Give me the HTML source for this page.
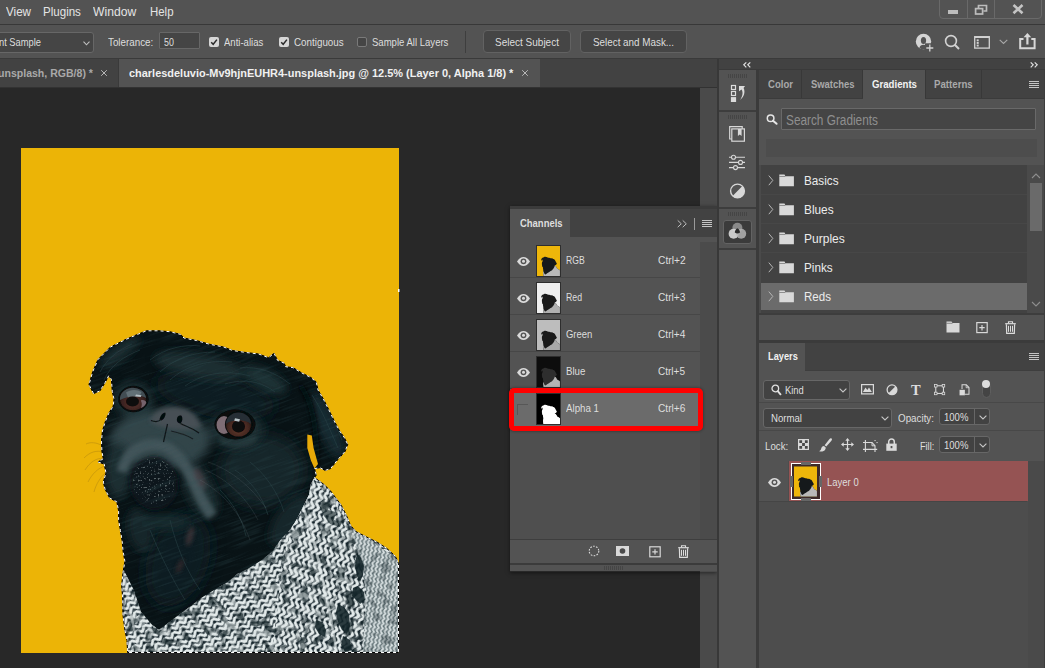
<!DOCTYPE html>
<html><head><meta charset="utf-8"><title>Photoshop</title>
<style>
*{box-sizing:border-box;margin:0;padding:0}
html,body{width:1045px;height:668px;overflow:hidden;background:#383838;font-family:"Liberation Sans",sans-serif;color:#dedede}
.a{position:absolute}
.t{position:absolute;white-space:nowrap;line-height:14px;height:14px;font-size:10.5px;color:#dedede}
.t{transform-origin:0 50%}
/*FIT*/
#m1{left:6.0px !important;transform:scaleX(0.969)}
#m2{left:43.4px !important;transform:scaleX(0.963)}
#m3{left:93.3px !important;transform:scaleX(1.012)}
#m4{left:150.0px !important;transform:scaleX(0.952)}
#o0{left:-1.0px !important;transform:scaleX(0.888)}
#o1{left:107.6px !important;transform:scaleX(0.933)}
#o2{left:164.3px !important;transform:scaleX(0.847)}
#o3{left:224.0px !important;transform:scaleX(0.908)}
#o4{left:294.0px !important;transform:scaleX(0.936)}
#o5{left:372.0px !important;transform:scaleX(0.909)}
#o6{left:494.8px !important;transform:scaleX(0.953)}
#o7{left:593.0px !important;transform:scaleX(0.938)}
#d1{left:-2.0px !important;transform:scaleX(0.959)}
#d2{left:129.2px !important;transform:scaleX(0.995)}
#c0{left:520.0px !important;transform:scaleX(0.860)}
#c1{left:566.3px !important;transform:scaleX(0.821)}
#c4{left:566.0px !important;transform:scaleX(0.923)}
#c5{left:566.0px !important;transform:scaleX(0.926)}
#k1{left:658.0px !important;transform:scaleX(0.975)}
#k4{left:658.0px !important;transform:scaleX(0.954)}
#g1{left:768.0px !important;transform:scaleX(0.870)}
#g2{left:811.0px !important;transform:scaleX(0.857)}
#g3{left:872.0px !important;transform:scaleX(0.876)}
#g5{left:786.0px !important;transform:scaleX(0.844)}
#r1{left:804.0px !important;transform:scaleX(0.937)}
#g4{left:934.0px !important;transform:scaleX(0.879)}
#r2{left:803.8px !important;transform:scaleX(0.946)}
#r3{left:803.8px !important;transform:scaleX(0.962)}
#r4{left:803.8px !important;transform:scaleX(0.939)}
#r5{left:803.8px !important;transform:scaleX(0.922)}
#l0{left:768.2px !important;transform:scaleX(0.840)}
#l1{left:785.2px !important;transform:scaleX(0.895)}
#l2{left:771.0px !important;transform:scaleX(0.916)}
#l3{left:898.2px !important;transform:scaleX(0.935)}
#l4{left:944.2px !important;transform:scaleX(0.908)}
#l5{left:765.0px !important;transform:scaleX(0.924)}
#l6{left:920.0px !important;transform:scaleX(0.869)}
#l7{left:944.2px !important;transform:scaleX(0.908)}
#l8{left:827.3px !important;transform:scaleX(0.905)}
#c2{left:566.0px !important;transform:scaleX(0.830)}
#c3{left:566.0px !important;transform:scaleX(0.901)}
#k2{left:658.0px !important;transform:scaleX(0.968)}
#k3{left:658.0px !important;transform:scaleX(0.968)}
#k5{left:658.0px !important;transform:scaleX(0.968)}
/*ENDFIT*/
.m{font-size:12px;line-height:16px;height:16px;top:4px;color:#e4e4e4}
svg{position:absolute;overflow:visible}
#menubar{left:0;top:0;width:1045px;height:24px;background:#535353}
#optbar{left:0;top:25px;width:1045px;height:33px;background:#535353}
#tabbar{left:0;top:59px;width:717px;height:28px;background:#424242}
#canvas{left:0;top:88px;width:700px;height:580px;background:#282828}
#vscroll{left:700px;top:88px;width:17px;height:580px;background:#4a4a4a}
#dockhdr{left:719px;top:59px;width:326px;height:10px;background:#424242}
#iconcol{left:719px;top:70px;width:37px;height:598px;background:#535353}
#rightp{left:759px;top:70px;width:286px;height:598px;background:#535353}
.box{position:absolute;background:#454545;border:1px solid #676767;border-radius:3px}
.cb{position:absolute;width:10px;height:10px;top:37px;background:#d6d6d6;border-radius:2px}
.btn{position:absolute;top:30px;height:23px;background:#454545;border:1px solid #626262;border-radius:4px}
#chan{left:510px;top:206px;width:207px;height:366px;box-shadow:0 1px 4px rgba(0,0,0,.5)}
.crow{position:absolute;left:0;width:190px;height:37px;background:#535353;border-bottom:1px solid #474747}
.b{font-weight:bold;font-size:11px}
.hamb{width:10px;height:7px;background:repeating-linear-gradient(to bottom,#c4c4c4 0 1px,transparent 1px 2px)}
.grip{background:repeating-linear-gradient(to right,#454545 0 1px,transparent 1px 2px)}
.l{font-size:12.500px;line-height:16px;height:16px;color:#ececec}
</style></head><body>
<svg width="0" height="0" style="position:absolute"><defs>
<g id="eye"><path d="M0 4.500C2 1.300 4.300 0 6.500 0S11 1.300 13 4.500C11 7.700 8.700 9 6.500 9S2 7.700 0 4.500z" fill="#dadada"/><circle cx="6.500" cy="4.300" r="2.900" fill="#535353"/><circle cx="6.500" cy="4.300" r="1.500" fill="#dadada"/></g>
<path id="minidog" d="M6 14c1-2 3-3 5-3c3 0 6 1 8 3c1 1 1.500 3 .5 4l-2 1l-1 4l-4 7H8l-1-8c-1-2-2-5-1-8z"/>
<path id="miniscarf" d="M9 31l1-5l4 2l4-5l4 1l2 3v4z"/>
<path id="chev" d="M0.800 0.600L4.800 5.400L0.800 10.200" fill="none" stroke="#b6b6b6" stroke-width="1"/>
<g id="folder"><path d="M0.300 0.600h5.200l0.900 1.700h8.500v9.900H0.300z" fill="#d9d9d9"/><path d="M0.300 2.500h6" stroke="#424242" stroke-width="0.500"/></g>
<path id="dn" d="M0.600 0.600L4 4L7.400 0.600" fill="none" stroke="#c6c6c6" stroke-width="1.100"/>
<g id="trash"><path d="M0.200 2.700h10.600" stroke="#dcdcdc" stroke-width="1.200" fill="none"/><path d="M3.500 2.400V0.700h4v1.700" stroke="#dcdcdc" stroke-width="1.100" fill="none"/><path d="M1.400 3.200l0.300 9.200h7.600l0.300-9.200" stroke="#dcdcdc" stroke-width="1.200" fill="none"/><path d="M3.500 4.800v6M5.500 4.800v6M7.500 4.800v6" stroke="#dcdcdc" stroke-width="1" fill="none"/></g>
</defs></svg>
<!-- MENU BAR -->
<div id="menubar" class="a">
 <span class="t m" id="m1" style="left:6px">View</span>
 <span class="t m" id="m2" style="left:43px">Plugins</span>
 <span class="t m" id="m3" style="left:93px">Window</span>
 <span class="t m" id="m4" style="left:149px">Help</span>
 <div class="a" style="left:939px;top:-2px;width:103px;height:21px;border:1px solid #696969;border-radius:0 0 4px 4px"></div>
 <div class="a" style="left:967px;top:0;width:1px;height:18px;background:#696969"></div>
 <div class="a" style="left:994px;top:0;width:1px;height:18px;background:#696969"></div>
 <div class="a" style="left:948px;top:10px;width:10px;height:4px;background:#bcbcbc"></div>
 <svg style="left:974px;top:4px" width="14" height="12" viewBox="0 0 14 12"><path d="M4.5 4.2V1.5h8v5.5H9.4" fill="none" stroke="#bcbcbc" stroke-width="1.7"/><rect x="1.6" y="4.6" width="7" height="5.4" fill="none" stroke="#bcbcbc" stroke-width="1.7"/></svg>
 <svg style="left:1012px;top:4px" width="12" height="10" viewBox="0 0 12 10"><path d="M1.5 1L10.5 9.2M10.5 1L1.5 9.2" fill="none" stroke="#c4c4c4" stroke-width="2.6"/></svg>
</div>
<!-- OPTIONS BAR -->
<div id="optbar" class="a"></div>
<div class="box" style="left:-5px;top:32px;width:99px;height:21px"></div>
<span class="t" id="o0" style="left:-5px;top:35px">nt Sample</span>
<svg style="left:83px;top:41px" width="7" height="5" viewBox="0 0 7 5"><path d="M0.500 0.600L3.500 3.800L6.500 0.600" fill="none" stroke="#c0c0c0" stroke-width="1.100"/></svg>
<span class="t" id="o1" style="left:107px;top:35px">Tolerance:</span>
<div class="box" style="left:159px;top:32px;width:41px;height:17px;border-radius:1px"></div>
<span class="t" id="o2" style="left:164px;top:35px">50</span>
<div class="cb" style="left:209px"></div>
<div class="cb" style="left:279px"></div>
<div class="cb" style="left:357px;background:#454545;border:1px solid #7a7a7a"></div>
<svg style="left:209px;top:37px" width="10" height="10" viewBox="0 0 10 10"><path d="M2.2 5.2L4.2 7.3L7.9 2.6" fill="none" stroke="#2a2a2a" stroke-width="1.5"/></svg>
<svg style="left:279px;top:37px" width="10" height="10" viewBox="0 0 10 10"><path d="M2.2 5.2L4.2 7.3L7.9 2.6" fill="none" stroke="#2a2a2a" stroke-width="1.5"/></svg>
<span class="t" id="o3" style="left:224px;top:35px">Anti-alias</span>
<span class="t" id="o4" style="left:294px;top:35px">Contiguous</span>
<span class="t" id="o5" style="left:372px;top:35px">Sample All Layers</span>
<div class="a" style="left:465px;top:31px;width:1px;height:22px;background:#3e3e3e"></div>
<div class="btn" style="left:483px;width:88px"></div>
<div class="btn" style="left:580px;width:107px"></div>
<span class="t" id="o6" style="left:495px;top:35px">Select Subject</span>
<span class="t" id="o7" style="left:593px;top:35px">Select and Mask...</span>
<!-- right icons of options bar -->
<svg style="left:914px;top:32px" width="22" height="20" viewBox="0 0 22 20">
 <circle cx="9.500" cy="9.500" r="7.700" fill="#d4d4d4"/>
 <ellipse cx="9.500" cy="8.400" rx="2.600" ry="3.500" fill="#535353"/>
 <path d="M5.400 16C5.800 13.800 7.400 12.800 9.500 12.800S13.200 13.800 13.600 16C11.400 17.600 7.600 17.600 5.400 16Z" fill="#535353"/>
 <rect x="11" y="11.300" width="9.500" height="9" fill="#535353"/>
 <path d="M15.800 12.500v7M12.300 16h7" stroke="#d4d4d4" stroke-width="1.300" fill="none"/>
</svg>
<svg style="left:944px;top:34px" width="17" height="17" viewBox="0 0 17 17"><circle cx="7" cy="7" r="5.400" fill="none" stroke="#d2d2d2" stroke-width="1.600"/><path d="M10.800 10.800L15 15" stroke="#d2d2d2" stroke-width="2" fill="none"/></svg>
<svg style="left:974px;top:36px" width="16" height="13" viewBox="0 0 16 13"><rect x="0.700" y="0.700" width="14.600" height="11.400" fill="none" stroke="#d2d2d2" stroke-width="1.300"/><rect x="0.700" y="0.400" width="14.600" height="1.600" fill="#d2d2d2"/><rect x="2.700" y="3.400" width="2" height="1.900" fill="#d2d2d2"/><rect x="2.700" y="6" width="2" height="1.900" fill="#d2d2d2"/><rect x="2.700" y="8.600" width="2" height="1.900" fill="#d2d2d2"/></svg>
<svg style="left:999px;top:39px" width="9" height="6" viewBox="0 0 9 6"><path d="M0.700 0.800L4.500 4.400L8.300 0.800" fill="none" stroke="#a8a8a8" stroke-width="1.100"/></svg>
<svg style="left:1019px;top:32px" width="17" height="18" viewBox="0 0 17 18"><path d="M4.500 7H1.200v9.300h14.400V7h-3.300" fill="none" stroke="#d8d8d8" stroke-width="2"/><path d="M8.400 12.500V4" stroke="#d8d8d8" stroke-width="2.200" fill="none"/><path d="M4.600 5.200L8.400 1l3.800 4.200z" fill="#d8d8d8"/></svg>
<!-- DOC TAB BAR -->
<div class="a" style="left:0;top:58px;width:1045px;height:1px;background:#3a3a3a"></div>
<div id="tabbar" class="a"></div>
<div class="a" style="left:0;top:87px;width:717px;height:1px;background:#323232"></div>
<div class="a" style="left:118px;top:59px;width:1px;height:28px;background:#3a3a3a"></div>
<div class="a" style="left:119px;top:59px;width:421px;height:28px;background:#535353"></div>
<span class="t" id="d1" style="left:-3px;top:66px;font-weight:bold;color:#a9a9a9;font-size:11px">unsplash, RGB/8) *</span>
<span class="t" id="d2" style="left:129px;top:66px;font-weight:bold;color:#f0f0f0;font-size:11px">charlesdeluvio-Mv9hjnEUHR4-unsplash.jpg @ 12.5% (Layer 0, Alpha 1/8) *</span>
<svg style="left:101px;top:70px" width="6" height="6" viewBox="0 0 6 6"><path d="M0.200 0.200L5.800 5.800M5.800 0.200L0.200 5.800" stroke="#c4c4c4" stroke-width="0.900" fill="none"/></svg>
<svg style="left:522px;top:70px" width="6" height="6" viewBox="0 0 6 6"><path d="M0.200 0.200L5.800 5.800M5.800 0.200L0.200 5.800" stroke="#c4c4c4" stroke-width="0.900" fill="none"/></svg>
<!-- CANVAS -->
<div id="canvas" class="a"></div>
<div id="vscroll" class="a"></div>
<!--DOG-->
<svg style="left:21px;top:148px" width="378" height="505" viewBox="21 148 378 505">
<defs>
<filter id="b1" x="-20%" y="-20%" width="140%" height="140%"><feGaussianBlur stdDeviation="0.550"/></filter>
<radialGradient id="eyeL" cx="0.500" cy="0.650" r="0.600"><stop offset="0" stop-color="#5a352e"/><stop offset="0.700" stop-color="#3a2220"/><stop offset="1" stop-color="#1a1112"/></radialGradient>
<radialGradient id="eyeR" cx="0.500" cy="0.650" r="0.600"><stop offset="0" stop-color="#643a2c"/><stop offset="0.700" stop-color="#42261f"/><stop offset="1" stop-color="#1a1112"/></radialGradient>
<filter id="b2" x="-50%" y="-50%" width="200%" height="200%"><feGaussianBlur stdDeviation="2"/></filter>
<filter id="b4" x="-50%" y="-50%" width="200%" height="200%"><feGaussianBlur stdDeviation="4"/></filter>
<filter id="b7" x="-50%" y="-50%" width="200%" height="200%"><feGaussianBlur stdDeviation="7"/></filter>
<path id="dogpath" d="M93.5 393.6L89.0 384.6L92.6 372.0L98.0 359.5L110.5 347.0L125.0 339.8L137.5 334.4L146.4 330.8L159.0 330.8L169.8 331.7L180.6 334.4L184.0 338.0L196.7 340.6L209.3 344.2L223.7 347.0L232.6 350.5L244.4 352.3L258.7 354.0L268.6 357.7L274.0 353.2L277.6 360.4L284.0 363.0L285.7 366.7L292.9 367.6L301.9 373.0L310.9 377.5L316.3 382.0L318.0 390.0L323.4 399.0L328.8 409.8L335.0 422.4L339.6 431.0L344.1 437.2L347.7 444.4L345.0 451.6L337.8 459.6L330.6 468.6L325.2 470.4L319.8 467.7L314.5 468.6L316.3 475.0L314.5 477.6L323.4 484.0L330.6 491.0L336.0 498.3L341.4 505.5L346.8 516.3L350.4 525.2L355.8 531.5L366.6 537.0L377.3 542.3L386.3 548.0L395.3 556.2L398.5 563.4L398.5 652.5L127.6 652.5L127.0 640.5L124.9 629.8L123.0 615.4L122.7 599.0L121.7 585.0L123.0 572.3L124.9 561.5L123.0 550.8L122.2 541.3L120.4 530.5L118.6 519.8L118.6 510.8L116.8 501.8L109.6 498.0L105.0 489.0L103.3 482.0L106.0 473.0L104.2 464.0L98.0 462.0L103.3 458.7L101.9 451.5L101.5 440.8L102.4 431.0L105.0 422.4L108.7 413.4L113.2 406.2L114.0 399.0L112.3 391.8L111.4 379.3L108.7 375.7L105.0 382.8L99.8 391.0Z"/><path id="scarfpath" d="M124.0 570.5L123.0 572.3L121.7 585.0L122.7 599.0L123.0 615.4L124.9 629.8L127.0 640.5L127.6 652.5L398.5 652.5L398.5 563.4L395.3 556.2L386.3 548.0L377.3 542.3L366.6 537.0L355.8 531.5L350.4 525.2L346.8 516.3L341.4 505.5L336.0 498.3L330.6 491.0L323.4 484.0L314.5 477.6L310.9 484.0L309.0 494.7L301.9 509.0L296.5 519.8L289.3 530.6L280.3 540.0L273.0 550.8L262.3 559.8L248.0 568.8L237.0 574.0L229.0 581.3L216.5 588.5L202.0 597.5L187.7 608.2L173.4 619.0L159.0 629.8L151.8 624.4L141.0 611.8L133.9 590.3Z"/>
<clipPath id="dogclip"><path d="M93.5 393.6L89.0 384.6L92.6 372.0L98.0 359.5L110.5 347.0L125.0 339.8L137.5 334.4L146.4 330.8L159.0 330.8L169.8 331.7L180.6 334.4L184.0 338.0L196.7 340.6L209.3 344.2L223.7 347.0L232.6 350.5L244.4 352.3L258.7 354.0L268.6 357.7L274.0 353.2L277.6 360.4L284.0 363.0L285.7 366.7L292.9 367.6L301.9 373.0L310.9 377.5L316.3 382.0L318.0 390.0L323.4 399.0L328.8 409.8L335.0 422.4L339.6 431.0L344.1 437.2L347.7 444.4L345.0 451.6L337.8 459.6L330.6 468.6L325.2 470.4L319.8 467.7L314.5 468.6L316.3 475.0L314.5 477.6L323.4 484.0L330.6 491.0L336.0 498.3L341.4 505.5L346.8 516.3L350.4 525.2L355.8 531.5L366.6 537.0L377.3 542.3L386.3 548.0L395.3 556.2L398.5 563.4L398.5 652.5L127.6 652.5L127.0 640.5L124.9 629.8L123.0 615.4L122.7 599.0L121.7 585.0L123.0 572.3L124.9 561.5L123.0 550.8L122.2 541.3L120.4 530.5L118.6 519.8L118.6 510.8L116.8 501.8L109.6 498.0L105.0 489.0L103.3 482.0L106.0 473.0L104.2 464.0L98.0 462.0L103.3 458.7L101.9 451.5L101.5 440.8L102.4 431.0L105.0 422.4L108.7 413.4L113.2 406.2L114.0 399.0L112.3 391.8L111.4 379.3L108.7 375.7L105.0 382.8L99.8 391.0Z"/></clipPath>
<clipPath id="scarfclip"><path d="M124.0 570.5L123.0 572.3L121.7 585.0L122.7 599.0L123.0 615.4L124.9 629.8L127.0 640.5L127.6 652.5L398.5 652.5L398.5 563.4L395.3 556.2L386.3 548.0L377.3 542.3L366.6 537.0L355.8 531.5L350.4 525.2L346.8 516.3L341.4 505.5L336.0 498.3L330.6 491.0L323.4 484.0L314.5 477.6L310.9 484.0L309.0 494.7L301.9 509.0L296.5 519.8L289.3 530.6L280.3 540.0L273.0 550.8L262.3 559.8L248.0 568.8L237.0 574.0L229.0 581.3L216.5 588.5L202.0 597.5L187.7 608.2L173.4 619.0L159.0 629.8L151.8 624.4L141.0 611.8L133.9 590.3Z"/></clipPath>
<pattern id="knit" width="10" height="5.500" patternUnits="userSpaceOnUse" patternTransform="rotate(-34)">
 <rect width="10" height="5.500" fill="#14232a"/>
 <path d="M1.200 0.200L4.300 3.400M5.700 3.400L8.800 0.200M1.200 5.700L4.300 8.900M5.700 8.900L8.800 5.700M1.200 -5.300L4.300 -2.100M5.700 -2.100L8.800 -5.300" stroke="#e4ebeb" stroke-width="3" fill="none" stroke-linecap="round"/>
</pattern>
<pattern id="knit2" width="10" height="5.500" patternUnits="userSpaceOnUse" patternTransform="rotate(-72)">
 <rect width="10" height="5.500" fill="#14232a"/>
 <path d="M1.200 0.200L4.300 3.400M5.700 3.400L8.800 0.200M1.200 5.700L4.300 8.900M5.700 8.900L8.800 5.700M1.200 -5.300L4.300 -2.100M5.700 -2.100L8.800 -5.300" stroke="#e4ebeb" stroke-width="3" fill="none" stroke-linecap="round"/>
</pattern>
<pattern id="knit3" width="5" height="4" patternUnits="userSpaceOnUse" patternTransform="rotate(-80)">
 <rect width="5" height="4" fill="#5f6f73"/>
 <path d="M0.400 0.400L2.500 2.300L4.600 0.400M0.400 4.400L2.500 6.300L4.600 4.400M0.400 -3.600L2.500 -1.700L4.600 -3.600" stroke="#d8e0e1" stroke-width="1.900" fill="none" stroke-linecap="round"/>
</pattern>
<filter id="speck" color-interpolation-filters="sRGB" x="0" y="0" width="100%" height="100%"><feTurbulence type="fractalNoise" baseFrequency="0.550" numOctaves="1" seed="3" result="t"/><feColorMatrix in="t" type="matrix" values="0 0 0 0 0.400  0 0 0 0 0.440  0 0 0 0 0.450  7 0 0 0 -4.100" result="c"/><feComposite in="c" in2="SourceGraphic" operator="in"/></filter>
<filter id="hair" color-interpolation-filters="sRGB" x="0" y="0" width="100%" height="100%"><feTurbulence type="fractalNoise" baseFrequency="0.030 0.450" numOctaves="2" seed="11" result="t"/><feColorMatrix in="t" type="matrix" values="0 0 0 0 0.200  0 0 0 0 0.320  0 0 0 0 0.340  0 4 0 0 -1.900"/></filter>
<filter id="noise" color-interpolation-filters="sRGB" x="0" y="0" width="100%" height="100%"><feTurbulence type="fractalNoise" baseFrequency="0.110" numOctaves="2" seed="7" result="t"/><feColorMatrix in="t" type="matrix" values="0 0 0 0 0.080  0 0 0 0 0.140  0 0 0 0 0.160  6 0 0 0 -3.050"/></filter>
<filter id="noisew" color-interpolation-filters="sRGB" x="0" y="0" width="100%" height="100%"><feTurbulence type="fractalNoise" baseFrequency="0.130" numOctaves="2" seed="23" result="t"/><feColorMatrix in="t" type="matrix" values="0 0 0 0 0.860  0 0 0 0 0.890  0 0 0 0 0.890  0 6 0 0 -3.100"/></filter>
</defs>
<rect x="21" y="148" width="378" height="505" fill="#ecb406"/>
<g id="whisk" stroke="#a57d10" stroke-width="0.600" fill="none" opacity="0.700"><path d="M104 452C96 450 90 452 84 458M104 458C96 458 90 462 85 470M105 466C98 468 92 474 88 482M106 472C100 478 96 484 94 492M103 446C96 442 90 442 86 444"/></g>
<path d="M93.5 393.6L89.0 384.6L92.6 372.0L98.0 359.5L110.5 347.0L125.0 339.8L137.5 334.4L146.4 330.8L159.0 330.8L169.8 331.7L180.6 334.4L184.0 338.0L196.7 340.6L209.3 344.2L223.7 347.0L232.6 350.5L244.4 352.3L258.7 354.0L268.6 357.7L274.0 353.2L277.6 360.4L284.0 363.0L285.7 366.7L292.9 367.6L301.9 373.0L310.9 377.5L316.3 382.0L318.0 390.0L323.4 399.0L328.8 409.8L335.0 422.4L339.6 431.0L344.1 437.2L347.7 444.4L345.0 451.6L337.8 459.6L330.6 468.6L325.2 470.4L319.8 467.7L314.5 468.6L316.3 475.0L314.5 477.6L323.4 484.0L330.6 491.0L336.0 498.3L341.4 505.5L346.8 516.3L350.4 525.2L355.8 531.5L366.6 537.0L377.3 542.3L386.3 548.0L395.3 556.2L398.5 563.4L398.5 652.5L127.6 652.5L127.0 640.5L124.9 629.8L123.0 615.4L122.7 599.0L121.7 585.0L123.0 572.3L124.9 561.5L123.0 550.8L122.2 541.3L120.4 530.5L118.6 519.8L118.6 510.8L116.8 501.8L109.6 498.0L105.0 489.0L103.3 482.0L106.0 473.0L104.2 464.0L98.0 462.0L103.3 458.7L101.9 451.5L101.5 440.8L102.4 431.0L105.0 422.4L108.7 413.4L113.2 406.2L114.0 399.0L112.3 391.8L111.4 379.3L108.7 375.7L105.0 382.8L99.8 391.0Z" fill="#091316"/>
<g clip-path="url(#dogclip)">
<g filter="url(#b7)">
 <ellipse cx="262" cy="470" rx="42" ry="36" fill="#13252a"/>
 <ellipse cx="178" cy="560" rx="30" ry="48" fill="#0f1f24" transform="rotate(20 178 560)"/>
 <ellipse cx="215" cy="395" rx="60" ry="22" fill="#111f24" transform="rotate(12 215 395)"/>
</g>
<g filter="url(#b4)">
 <ellipse cx="200" cy="366" rx="46" ry="12" fill="#1b2e33" transform="rotate(10 200 366)"/>
 <ellipse cx="265" cy="380" rx="24" ry="10" fill="#1c3035" transform="rotate(28 265 380)"/>
 <ellipse cx="120" cy="352" rx="24" ry="7" fill="#1a2e33" transform="rotate(-38 120 352)"/>
 <ellipse cx="327" cy="425" rx="10" ry="36" fill="#182c30" transform="rotate(-24 327 425)"/>
 <ellipse cx="160" cy="440" rx="50" ry="30" fill="#33454a"/>
 <ellipse cx="118" cy="470" rx="13" ry="28" fill="#1d2d30"/>
 <ellipse cx="200" cy="490" rx="14" ry="30" fill="#1f2e32" transform="rotate(-25 200 490)"/>
 <ellipse cx="236" cy="430" rx="27" ry="19" fill="#1c2e33"/>
 <ellipse cx="133" cy="400" rx="19" ry="17" fill="#1f3035"/>
 <ellipse cx="290" cy="520" rx="14" ry="30" fill="#14262b" transform="rotate(35 290 520)"/>
 <ellipse cx="140" cy="530" rx="12" ry="22" fill="#15262b" transform="rotate(-12 140 530)"/>
 <ellipse cx="165" cy="522" rx="26" ry="8" fill="#192a2e"/>
</g>
<g filter="url(#b2)">
 <path d="M122 472C126 450 145 443 158 445C172 446 185 462 195 485C200 497 206 508 212 516" stroke="#43545a" stroke-width="11" fill="none"/>
 <ellipse cx="154" cy="483" rx="24" ry="27" fill="#10191b" transform="rotate(-8 154 483)"/>
 <ellipse cx="190" cy="536" rx="3" ry="10" fill="#3a3034" transform="rotate(15 190 536)"/>
 <ellipse cx="180" cy="566" rx="2.500" ry="8" fill="#30282c" transform="rotate(25 180 566)"/>
 <path d="M300 385C312 400 318 430 316 465" stroke="#050a0c" stroke-width="5" fill="none"/>
 <ellipse cx="200" cy="478" rx="4" ry="12" fill="#4d4349" transform="rotate(-25 200 478)" opacity="0.700"/>
 <path d="M220 440C232 447 246 446 256 438" stroke="#364d51" stroke-width="2" fill="none"/>
</g>
<g stroke="#2b4448" stroke-width="0.700" fill="none" opacity="0.800">
 <path d="M160 372C175 358 195 352 215 352M170 380C188 364 210 360 232 362M185 386C205 372 228 370 250 376M150 360C165 348 185 344 200 346M225 384C245 378 262 382 275 392M240 368C258 366 275 372 290 384"/>
 <path d="M100 372C106 360 118 350 132 344M104 380C110 366 124 356 140 350"/>
 <path d="M312 395C322 410 330 430 338 448M318 390C328 408 336 426 342 440"/>
 <path d="M235 470C250 480 262 495 268 515M250 462C265 474 278 492 284 512M220 490C232 502 242 518 246 536"/>
 <path d="M150 530C158 550 170 575 185 600M170 520C176 545 186 570 200 590"/>
</g>
<g opacity="0.850"><ellipse cx="154" cy="481" rx="21" ry="23" filter="url(#speck)"/></g>
<rect x="85" y="325" width="270" height="330" filter="url(#hair)" opacity="0.220" transform="rotate(-20 200 450)"/>
<g stroke="#7d8a8d" stroke-width="0.400" fill="none" opacity="0.450">
 <path d="M205 470C225 478 245 495 258 520M200 480C222 492 240 512 250 540M208 462C232 470 252 488 266 508"/>
</g>

</g>
<g clip-path="url(#scarfclip)">
 <rect x="120" y="470" width="280" height="185" fill="url(#knit)"/>
 <path d="M313 478L349 522L368 545L366 653L272 653L283 556L300 505Z" fill="url(#knit2)"/>
 <rect x="120" y="470" width="280" height="185" filter="url(#noise)" opacity="0.750"/>
 <rect x="120" y="470" width="280" height="185" filter="url(#noisew)" opacity="0.500"/>
 <path d="M352 528L399 560L399 653L363 653L366 590Z" fill="url(#knit3)"/>
 <path d="M352 528L399 560L399 653L363 653L366 590Z" filter="url(#noise)" opacity="0.350"/>
<g fill="#122327" opacity="0.880">
 <path d="M357 553L361 558L364 566L363 575L360 582L357 576L355 566L356 558Z"/>
 <path d="M353 588L358 586L364 592L365 600L360 604L356 600L352 596Z"/>
 <path d="M338 604L344 607L349 614L350 626L347 634L342 630L338 622L336 612Z"/>
 <path d="M316 620L322 622L326 630L325 637L319 634L315 627Z"/>
 <path d="M322 500L330 504L328 510L336 512L334 520L342 522L340 527L330 524L324 516L320 508Z" opacity="0.700"/>
 <path d="M343 636L350 640L352 650L345 652L341 645Z"/>
</g>
<g filter="url(#b1)">
 <path d="M302 503C315 540 328 600 337 653" stroke="#e6eded" stroke-width="2.500" fill="none" opacity="0.550"/>
 <path d="M124 575C128 600 132 625 140 653" stroke="#dfe6e6" stroke-width="2.500" fill="none" opacity="0.500"/>
</g>

</g>
<path d="M307.3 434.5L311.8 435.4L313.6 448.0L318.0 464.0L314.5 468.6L310.9 460.5L307.3 448.0Z" fill="#e6a908"/>
<g clip-path="url(#dogclip)">
<!-- nose -->
<g filter="url(#b2)"><path d="M150 421C154 410 166 406 177 407C190 408 198 416 201 427C190 432 160 430 150 421Z" fill="#465054"/></g>
<g filter="url(#b1)">
<path d="M159.500 419.500C160.500 415 163 412.500 165.500 412.800C165.800 415.500 164.500 419 161.500 420.500Z" fill="#05080a"/>
<path d="M176.800 420C177 416.500 179 415 181.500 415.800C183 418 182.500 421.500 180.500 423.500C178.500 423.500 177 422 176.800 420Z" fill="#05080a"/>
<path d="M167.500 424L163.500 442" stroke="#10171a" stroke-width="1.200" fill="none"/>
<path d="M151 420.500C156 422.500 159.500 421.500 161.500 419M180.500 423.500C186 426.500 192 427.500 199 433" stroke="#0e1417" stroke-width="1.200" fill="none"/>
<path d="M171 431C178 432.500 186 434.500 193 439" stroke="#1a2124" stroke-width="1.200" fill="none"/>
</g>
<!-- left eye -->
<g filter="url(#b1)">
<ellipse cx="133.400" cy="399" rx="15.200" ry="13.200" fill="#070a0c"/>
<ellipse cx="133" cy="399" rx="13" ry="11.200" fill="url(#eyeL)"/>
<path d="M120 400A13 11.200 0 0 1 146 398C140 394 128 396 120 400Z" fill="#424e53"/>
<path d="M126 392.500C130 389.300 137 389 141.500 392L139.500 396.500L128 397.500Z" fill="#6d7b82" opacity="0.750"/>
<ellipse cx="132.500" cy="401.500" rx="6.500" ry="5" fill="#100a0b"/>
<path d="M140.800 400.500C143 399.500 146 400.500 146.300 402.500C145.800 405 143 407.500 141 408C142 405.500 142.200 403 140.800 400.500Z" fill="#75646c"/>
<path d="M136 394.500l5.500 0.800l-0.800 1.800l-5.500-0.800z" fill="#b4bfc3"/>
</g>
<!-- right eye -->
<g filter="url(#b1)">
<ellipse cx="235" cy="424.500" rx="20.500" ry="15" fill="#070a0c"/>
<ellipse cx="224" cy="425" rx="7.500" ry="9" fill="#7e6d75"/>
<ellipse cx="238.500" cy="424.500" rx="13.600" ry="12.800" fill="#08090b"/>
<ellipse cx="238.500" cy="425" rx="12.500" ry="11.600" fill="url(#eyeR)"/>
<path d="M226 424A12.500 11.600 0 0 1 251 424C245 419 232 419 226 424Z" fill="#262f34"/>
<ellipse cx="238.500" cy="426.500" rx="6.500" ry="6" fill="#0c0708"/>
<path d="M235 418.300l5 1l-0.800 2.400l-5-1z" fill="#b9c3c7"/>
</g>
</g>

<path d="M93.5 393.6L89.0 384.6L92.6 372.0L98.0 359.5L110.5 347.0L125.0 339.8L137.5 334.4L146.4 330.8L159.0 330.8L169.8 331.7L180.6 334.4L184.0 338.0L196.7 340.6L209.3 344.2L223.7 347.0L232.6 350.5L244.4 352.3L258.7 354.0L268.6 357.7L274.0 353.2L277.6 360.4L284.0 363.0L285.7 366.7L292.9 367.6L301.9 373.0L310.9 377.5L316.3 382.0L318.0 390.0L323.4 399.0L328.8 409.8L335.0 422.4L339.6 431.0L344.1 437.2L347.7 444.4L345.0 451.6L337.8 459.6L330.6 468.6L325.2 470.4L319.8 467.7L314.5 468.6L316.3 475.0L314.5 477.6L323.4 484.0L330.6 491.0L336.0 498.3L341.4 505.5L346.8 516.3L350.4 525.2L355.8 531.5L366.6 537.0L377.3 542.3L386.3 548.0L395.3 556.2L398.5 563.4L398.5 652.5L127.6 652.5L127.0 640.5L124.9 629.8L123.0 615.4L122.7 599.0L121.7 585.0L123.0 572.3L124.9 561.5L123.0 550.8L122.2 541.3L120.4 530.5L118.6 519.8L118.6 510.8L116.8 501.8L109.6 498.0L105.0 489.0L103.3 482.0L106.0 473.0L104.2 464.0L98.0 462.0L103.3 458.7L101.9 451.5L101.5 440.8L102.4 431.0L105.0 422.4L108.7 413.4L113.2 406.2L114.0 399.0L112.3 391.8L111.4 379.3L108.7 375.7L105.0 382.8L99.8 391.0Z" fill="none" stroke="#000" stroke-width="1"/>
<path d="M93.5 393.6L89.0 384.6L92.6 372.0L98.0 359.5L110.5 347.0L125.0 339.8L137.5 334.4L146.4 330.8L159.0 330.8L169.8 331.7L180.6 334.4L184.0 338.0L196.7 340.6L209.3 344.2L223.7 347.0L232.6 350.5L244.4 352.3L258.7 354.0L268.6 357.7L274.0 353.2L277.6 360.4L284.0 363.0L285.7 366.7L292.9 367.6L301.9 373.0L310.9 377.5L316.3 382.0L318.0 390.0L323.4 399.0L328.8 409.8L335.0 422.4L339.6 431.0L344.1 437.2L347.7 444.4L345.0 451.6L337.8 459.6L330.6 468.6L325.2 470.4L319.8 467.7L314.5 468.6L316.3 475.0L314.5 477.6L323.4 484.0L330.6 491.0L336.0 498.3L341.4 505.5L346.8 516.3L350.4 525.2L355.8 531.5L366.6 537.0L377.3 542.3L386.3 548.0L395.3 556.2L398.5 563.4L398.5 652.5L127.6 652.5L127.0 640.5L124.9 629.8L123.0 615.4L122.7 599.0L121.7 585.0L123.0 572.3L124.9 561.5L123.0 550.8L122.2 541.3L120.4 530.5L118.6 519.8L118.6 510.8L116.8 501.8L109.6 498.0L105.0 489.0L103.3 482.0L106.0 473.0L104.2 464.0L98.0 462.0L103.3 458.7L101.9 451.5L101.5 440.8L102.4 431.0L105.0 422.4L108.7 413.4L113.2 406.2L114.0 399.0L112.3 391.8L111.4 379.3L108.7 375.7L105.0 382.8L99.8 391.0Z" fill="none" stroke="#fff" stroke-width="1" stroke-dasharray="3 3"/>
<rect x="398" y="289" width="1.500" height="3" fill="#fff"/>
</svg>
<!--ENDDOG-->
<!-- CHANNELS PANEL -->
<div id="chan" class="a">
 <div class="a" style="left:0;top:0;width:207px;height:3px;background:#3b3b3b"></div>
 <div class="a" style="left:0;top:3px;width:207px;height:28px;background:#424242"></div>
 <div class="a" style="left:0;top:3px;width:60px;height:29px;background:#535353"></div>
 <div class="a" style="left:0;top:31px;width:207px;height:334px;background:#535353"></div>
 <div class="a" style="left:0;top:35px;width:190px;height:298px;background:#4f4f4f"></div>
 <div class="a" style="left:190px;top:36px;width:17px;height:297px;background:#4b4b4b"></div>
 <div class="a" style="left:0;top:333px;width:207px;height:1px;background:#3e3e3e"></div>
 <div class="a" style="left:0;top:357px;width:207px;height:2px;background:#3b3b3b"></div>
 <!-- rows -->
 <div class="crow" style="top:35px"></div>
 <div class="crow" style="top:72px"></div>
 <div class="crow" style="top:109px"></div>
 <div class="crow" style="top:146px"></div>
 <div class="crow" style="top:183px;background:#6b6b6b;border:0"></div>
</div>
<!--CHANX-->
<span class="t b" id="c0" style="left:520px;top:216px">Channels</span>
<svg style="left:677px;top:220px" width="11" height="8" viewBox="0 0 11 8"><path d="M0.700 0.400L4.300 3.800L0.700 7.200M5.700 0.400L9.300 3.800L5.700 7.200" fill="none" stroke="#bdbdbd" stroke-width="1"/></svg>
<div class="a" style="left:694px;top:218px;width:1px;height:12px;background:#9a9a9a"></div>
<div class="a hamb" style="left:702px;top:220px"></div>
<!-- eyes -->
<svg class="eye" style="left:517px;top:257px" width="13" height="9" viewBox="0 0 13 9"><use href="#eye"/></svg>
<svg class="eye" style="left:517px;top:294px" width="13" height="9" viewBox="0 0 13 9"><use href="#eye"/></svg>
<svg class="eye" style="left:517px;top:331px" width="13" height="9" viewBox="0 0 13 9"><use href="#eye"/></svg>
<svg class="eye" style="left:517px;top:368px" width="13" height="9" viewBox="0 0 13 9"><use href="#eye"/></svg>
<div class="a" style="left:517px;top:404px;width:11px;height:11px;border-left:1px solid #575757;border-top:1px solid #575757"></div>
<!-- thumbs -->
<svg style="left:536px;top:245px" width="25" height="32" viewBox="0 0 25 32"><rect width="25" height="32" fill="#2e2e2e"/><rect x="1" y="1" width="23" height="30" fill="#eeb60a"/><g transform="translate(1 1) scale(0.0608 0.0594) translate(-21 -148)"><use href="#dogpath" fill="#15191b"/><use href="#scarfpath" fill="#b9b9b9"/></g></svg>
<svg style="left:536px;top:282px" width="25" height="32" viewBox="0 0 25 32"><rect width="25" height="32" fill="#2e2e2e"/><rect x="1" y="1" width="23" height="30" fill="#efefef"/><g transform="translate(1 1) scale(0.0608 0.0594) translate(-21 -148)"><use href="#dogpath" fill="#1a1a1a"/><use href="#scarfpath" fill="#b0b0b0"/></g></svg>
<svg style="left:536px;top:319px" width="25" height="32" viewBox="0 0 25 32"><rect width="25" height="32" fill="#2e2e2e"/><rect x="1" y="1" width="23" height="30" fill="#bdbdbd"/><g transform="translate(1 1) scale(0.0608 0.0594) translate(-21 -148)"><use href="#dogpath" fill="#1a1a1a"/><use href="#scarfpath" fill="#a8a8a8"/></g></svg>
<svg style="left:536px;top:356px" width="25" height="32" viewBox="0 0 25 32"><rect width="25" height="32" fill="#2e2e2e"/><rect x="1" y="1" width="23" height="30" fill="#0d0d0d"/><g transform="translate(1 1) scale(0.0608 0.0594) translate(-21 -148)"><use href="#dogpath" fill="#2e2e2e"/><use href="#scarfpath" fill="#b5b5b5"/></g></svg>
<svg style="left:536px;top:393px" width="25" height="32" viewBox="0 0 25 32"><rect width="25" height="32" fill="#2e2e2e"/><rect x="1" y="1" width="23" height="30" fill="#000"/><g transform="translate(1 1) scale(0.0608 0.0594) translate(-21 -148)"><use href="#dogpath" fill="#fff"/><use href="#scarfpath" fill="#fff"/></g></svg>
<span class="t" id="c1" style="left:566px;top:253px">RGB</span>
<span class="t" id="c2" style="left:566px;top:290px">Red</span>
<span class="t" id="c3" style="left:566px;top:327px">Green</span>
<span class="t" id="c4" style="left:566px;top:364px">Blue</span>
<span class="t" id="c5" style="left:566px;top:401px">Alpha 1</span>
<span class="t" id="k1" style="left:658px;top:253px">Ctrl+2</span>
<span class="t" id="k2" style="left:658px;top:290px">Ctrl+3</span>
<span class="t" id="k3" style="left:658px;top:327px">Ctrl+4</span>
<span class="t" id="k4" style="left:658px;top:364px">Ctrl+5</span>
<span class="t" id="k5" style="left:658px;top:401px">Ctrl+6</span>
<!-- red highlight -->
<div class="a" style="left:509px;top:388px;width:194px;height:43px;border:5px solid #ff0000;border-radius:5px;box-shadow:0 0 3px rgba(0,0,0,.45)"></div>
<!-- bottom icons -->
<svg style="left:588px;top:545px" width="12" height="12" viewBox="0 0 12 12"><circle cx="6" cy="6" r="4.800" fill="none" stroke="#d8d8d8" stroke-width="1.100" stroke-dasharray="1.700 1.320"/></svg>
<svg style="left:616px;top:546px" width="13" height="10" viewBox="0 0 13 10"><rect width="13" height="10" fill="#d8d8d8"/><circle cx="6.500" cy="5" r="2.800" fill="#4a4a4a"/></svg>
<svg style="left:649px;top:546px" width="12" height="12" viewBox="0 0 12 12"><rect x="0.800" y="0.800" width="10.400" height="10" fill="none" stroke="#d8d8d8" stroke-width="1.200"/><path d="M6 3.200v5.400M3.300 5.900h5.400" stroke="#d8d8d8" stroke-width="1.200"/></svg>
<svg style="left:678px;top:545px" width="11" height="13" viewBox="0 0 11 13"><use href="#trash"/></svg>
<!-- grip -->
<div class="a grip" style="left:604px;top:566px;width:20px;height:4px"></div>
<!--ENDCHANX-->
<!-- DOCK -->
<div id="dockhdr" class="a"></div>
<div class="a" style="left:717px;top:59px;width:2px;height:609px;background:#383838"></div>
<div id="iconcol" class="a"></div>
<div class="a" style="left:756px;top:70px;width:3px;height:598px;background:#3b3b3b"></div>
<div id="rightp" class="a"></div>
<!--ICONCOL-->
<!-- dock header arrows -->
<svg style="left:743px;top:62px" width="8" height="6" viewBox="0 0 8 6"><path d="M3.300 0.300L0.800 2.800L3.300 5.300M7.300 0.300L4.800 2.800L7.300 5.300" fill="none" stroke="#e0e0e0" stroke-width="1.200"/></svg>
<svg style="left:1030px;top:62px" width="8" height="6" viewBox="0 0 8 6"><path d="M0.700 0.300L3.200 2.800L0.700 5.300M4.700 0.300L7.200 2.800L4.700 5.300" fill="none" stroke="#e0e0e0" stroke-width="1.200"/></svg>
<div class="a" style="left:719px;top:69px;width:326px;height:1px;background:#3a3a3a"></div>
<!-- separators -->
<div class="a" style="left:719px;top:110px;width:37px;height:2px;background:#3d3d3d"></div>
<div class="a" style="left:719px;top:207px;width:37px;height:2px;background:#3d3d3d"></div>
<div class="a" style="left:719px;top:248px;width:37px;height:2px;background:#3d3d3d"></div>
<div class="a grip" style="left:728px;top:74px;width:20px;height:4px"></div>
<div class="a grip" style="left:728px;top:115px;width:20px;height:4px"></div>
<div class="a grip" style="left:728px;top:212px;width:20px;height:4px"></div>
<!-- history icon -->
<svg style="left:730px;top:84px" width="17" height="19" viewBox="0 0 17 19">
 <rect x="1.500" y="1.500" width="4" height="4" fill="none" stroke="#dcdcdc" stroke-width="1.200"/>
 <rect x="1.500" y="7.500" width="4" height="4" fill="none" stroke="#dcdcdc" stroke-width="1.200"/>
 <rect x="0.900" y="13.100" width="5.200" height="4.900" fill="#dcdcdc"/>
 <path d="M9 2L15 2L13.600 4C15.600 8 14 13 10 16C12.500 12.500 13.400 8.500 11.600 5.500L9 7.200Z" fill="#dcdcdc"/>
</svg>
<!-- libraries icon -->
<svg style="left:728px;top:125px" width="18" height="18" viewBox="0 0 18 18">
 <path d="M3.800 14H1.700V1.700H14.200V3.800" fill="none" stroke="#d8d8d8" stroke-width="1.200"/>
 <rect x="3.800" y="3.900" width="12.600" height="12.300" fill="none" stroke="#d8d8d8" stroke-width="1.200"/>
 <path d="M9.900 3.900h3.700v7.200l-1.850-1.700l-1.850 1.700z" fill="#d8d8d8"/>
</svg>
<!-- sliders icon -->
<svg style="left:728px;top:154px" width="18" height="17" viewBox="0 0 18 17">
 <path d="M1 3.200h16M1 8.400h16M1 13.600h16" stroke="#d8d8d8" stroke-width="1.100" fill="none"/>
 <circle cx="5.500" cy="3.200" r="2" fill="#535353" stroke="#d8d8d8" stroke-width="1.100"/>
 <circle cx="12.500" cy="8.400" r="2" fill="#535353" stroke="#d8d8d8" stroke-width="1.100"/>
 <circle cx="7.500" cy="13.600" r="2" fill="#535353" stroke="#d8d8d8" stroke-width="1.100"/>
</svg>
<!-- adjustments half circle -->
<svg style="left:729px;top:183px" width="17" height="17" viewBox="0 0 17 17">
 <circle cx="8.500" cy="8" r="6.900" fill="none" stroke="#d8d8d8" stroke-width="1.400"/>
 <path d="M13.400 3.100A6.900 6.900 0 0 1 3.600 12.900z" fill="#d8d8d8"/>
</svg>
<!-- channels button -->
<div class="a" style="left:723px;top:220px;width:29px;height:24px;background:#3b3b3b;border:1px solid #636363;border-radius:3px"></div>
<svg style="left:728px;top:222px" width="19" height="18" viewBox="0 0 19 18">
 <circle cx="9.400" cy="5.800" r="5" fill="#8a8a8a"/>
 <circle cx="5.600" cy="11.800" r="5" fill="#d6d6d6" fill-opacity="0.920"/>
 <circle cx="13.200" cy="11.800" r="5" fill="#b4b4b4" fill-opacity="0.850"/>
 <path d="M9.400 6.200c1.700 1 2.600 2.600 2.600 4.400c-.9.600-1.700.9-2.600.9s-1.700-.3-2.600-.9c0-1.800.9-3.400 2.600-4.400z" fill="#2a2a2a"/>
</svg>
<!--ENDICONCOL-->
<!--GRAD-->
<!-- tab bar -->
<div class="a" style="left:759px;top:70px;width:286px;height:28px;background:#424242"></div>
<div class="a" style="left:759px;top:98px;width:286px;height:1px;background:#3b3b3b"></div>
<div class="a" style="left:801px;top:70px;width:1px;height:28px;background:#383838"></div>
<div class="a" style="left:862px;top:70px;width:1px;height:28px;background:#383838"></div>
<div class="a" style="left:925px;top:70px;width:1px;height:28px;background:#383838"></div>
<div class="a" style="left:981px;top:70px;width:1px;height:28px;background:#383838"></div>
<div class="a" style="left:863px;top:70px;width:62px;height:30px;background:#535353"></div>
<span class="t b" id="g1" style="left:768px;top:76.500px;color:#a9a9a9">Color</span>
<span class="t b" id="g2" style="left:811px;top:76.500px;color:#a9a9a9">Swatches</span>
<span class="t b" id="g3" style="left:872px;top:76.500px;color:#f2f2f2">Gradients</span>
<span class="t b" id="g4" style="left:934px;top:76.500px;color:#a9a9a9">Patterns</span>
<div class="a hamb" style="left:1029px;top:81px"></div>
<!-- search -->
<svg style="left:766px;top:114px" width="12" height="11" viewBox="0 0 12 11"><circle cx="4.600" cy="4.300" r="3.300" fill="none" stroke="#e6e6e6" stroke-width="1.500"/><path d="M7 6.700L10.600 9.800" stroke="#e6e6e6" stroke-width="2" stroke-linecap="round"/></svg>
<div class="box" style="left:781px;top:108px;width:255px;height:22px;border-radius:1px;border-color:#696969"></div>
<span class="t" id="g5" style="left:786px;top:112px;font-size:14px;line-height:16px;height:16px;color:#8f8f8f">Search Gradients</span>
<div class="a" style="left:766px;top:139px;width:271px;height:18px;background:#4d4d4d"></div>
<!-- list -->
<div class="a" style="left:759px;top:165px;width:286px;height:149px;background:#4a4a4a"></div>
<div class="a" style="left:761px;top:165px;width:266px;height:148px;background:#424242"></div>
<div class="a" style="left:761px;top:194px;width:266px;height:1px;background:#474747"></div>
<div class="a" style="left:761px;top:223px;width:266px;height:1px;background:#474747"></div>
<div class="a" style="left:761px;top:252px;width:266px;height:1px;background:#474747"></div>
<div class="a" style="left:761px;top:283px;width:266px;height:27px;background:#6b6b6b"></div>
<div class="a" style="left:759px;top:313px;width:286px;height:2px;background:#3d3d3d"></div>
<div class="a" style="left:1030px;top:183px;width:12px;height:48px;background:#6a6a6a"></div>
<svg style="left:1031px;top:173px" width="10" height="6" viewBox="0 0 10 6"><path d="M1 5L5 1L9 5" fill="none" stroke="#8e8e8e" stroke-width="1.100"/></svg>
<svg style="left:1031px;top:301px" width="10" height="6" viewBox="0 0 10 6"><path d="M1 1L5 5L9 1" fill="none" stroke="#8e8e8e" stroke-width="1.100"/></svg>
<!-- rows -->
<svg style="left:768px;top:175px" width="6" height="11" viewBox="0 0 6 11"><use href="#chev"/></svg>
<svg style="left:768px;top:204px" width="6" height="11" viewBox="0 0 6 11"><use href="#chev"/></svg>
<svg style="left:768px;top:233px" width="6" height="11" viewBox="0 0 6 11"><use href="#chev"/></svg>
<svg style="left:768px;top:262px" width="6" height="11" viewBox="0 0 6 11"><use href="#chev"/></svg>
<svg style="left:768px;top:291px" width="6" height="11" viewBox="0 0 6 11"><use href="#chev"/></svg>
<svg style="left:779px;top:174px" width="16" height="13" viewBox="0 0 16 13"><use href="#folder"/></svg>
<svg style="left:779px;top:203px" width="16" height="13" viewBox="0 0 16 13"><use href="#folder"/></svg>
<svg style="left:779px;top:232px" width="16" height="13" viewBox="0 0 16 13"><use href="#folder"/></svg>
<svg style="left:779px;top:261px" width="16" height="13" viewBox="0 0 16 13"><use href="#folder"/></svg>
<svg style="left:779px;top:290px" width="16" height="13" viewBox="0 0 16 13"><use href="#folder"/></svg>
<span class="t l" id="r1" style="left:804px;top:173px">Basics</span>
<span class="t l" id="r2" style="left:804px;top:202px">Blues</span>
<span class="t l" id="r3" style="left:804px;top:231px">Purples</span>
<span class="t l" id="r4" style="left:804px;top:260px">Pinks</span>
<span class="t l" id="r5" style="left:804px;top:289px">Reds</span>
<!-- bottom toolbar -->
<svg style="left:946px;top:321px" width="14" height="12" viewBox="0 0 14 12"><path d="M0.500 0.500h5l1 1.500h7v9.500h-13z" fill="#d8d8d8"/><path d="M0.500 2.300h6" stroke="#535353" stroke-width="0.600"/></svg>
<svg style="left:976px;top:322px" width="12" height="12" viewBox="0 0 12 12"><rect x="0.800" y="0.600" width="10.400" height="10" fill="none" stroke="#d8d8d8" stroke-width="1.200"/><path d="M6 3v5.400M3.300 5.700h5.400" stroke="#d8d8d8" stroke-width="1.200"/></svg>
<svg style="left:1005px;top:321px" width="11" height="13" viewBox="0 0 11 13"><use href="#trash"/></svg>
<!-- gap between panels -->
<div class="a" style="left:759px;top:340px;width:286px;height:3px;background:#3b3b3b"></div>
<!--ENDGRAD-->
<!--LAYERS-->
<!-- layers tab bar -->
<div class="a" style="left:759px;top:343px;width:286px;height:27px;background:#424242"></div>
<div class="a" style="left:759px;top:370px;width:286px;height:1px;background:#3e3e3e"></div>
<div class="a" style="left:759px;top:343px;width:46px;height:29px;background:#535353"></div>
<span class="t b" id="l0" style="left:768px;top:349px;color:#f2f2f2">Layers</span>
<div class="a hamb" style="left:1029px;top:353px"></div>
<!-- kind row -->
<div class="box" style="left:763px;top:380px;width:87px;height:20px;background:#424242;border-color:#676767"></div>
<svg style="left:771px;top:384px" width="11" height="12" viewBox="0 0 11 12"><circle cx="4.300" cy="4.500" r="3.300" fill="none" stroke="#e0e0e0" stroke-width="1.300"/><path d="M6.800 7.200L9.500 10.300" stroke="#e0e0e0" stroke-width="1.900" stroke-linecap="round"/></svg>
<span class="t" id="l1" style="left:785px;top:383px">Kind</span>
<svg style="left:839px;top:388px" width="8" height="5" viewBox="0 0 8 5"><use href="#dn"/></svg>
<!-- filter icons -->
<svg style="left:861px;top:384px" width="13" height="11" viewBox="0 0 13 11"><rect x="0.600" y="0.600" width="11.800" height="9.300" fill="none" stroke="#dadada" stroke-width="1.200"/><path d="M1.900 8L4.500 3.400L6.300 6L8 3.600L10.900 8z" fill="#dadada"/></svg>
<svg style="left:886px;top:384px" width="12" height="12" viewBox="0 0 12 12"><circle cx="6" cy="5.800" r="4.900" fill="none" stroke="#dadada" stroke-width="1.300"/><path d="M9.500 2.300A4.900 4.900 0 0 1 2.500 9.300z" fill="#dadada"/></svg>
<span class="t" style="left:911px;top:380.500px;font-family:'Liberation Serif',serif;font-weight:bold;font-size:14.500px;line-height:18px;height:18px;color:#dedede">T</span>
<svg style="left:933.500px;top:383.800px" width="11.600" height="11.600" viewBox="0 0 13 13"><rect x="2" y="2" width="8.600" height="8.600" fill="none" stroke="#dadada" stroke-width="1.200"/><rect x="0.600" y="0.600" width="2.800" height="2.800" fill="#535353" stroke="#dadada" stroke-width="0.900"/><rect x="9.200" y="0.600" width="2.800" height="2.800" fill="#535353" stroke="#dadada" stroke-width="0.900"/><rect x="0.600" y="9.200" width="2.800" height="2.800" fill="#535353" stroke="#dadada" stroke-width="0.900"/><rect x="9.200" y="9.200" width="2.800" height="2.800" fill="#535353" stroke="#dadada" stroke-width="0.900"/></svg>
<svg style="left:959px;top:384px" width="11" height="12" viewBox="0 0 12 13"><path d="M3.300 5.500V0.900h4.700l2.900 2.900v7.300H6.500" fill="none" stroke="#dadada" stroke-width="1.100"/><path d="M7.800 1v3h3" fill="none" stroke="#dadada" stroke-width="0.900"/><rect x="0.600" y="6.300" width="5.800" height="6" fill="#dadada"/></svg>
<div class="a" style="left:981.500px;top:381px;width:9px;height:17px;border-radius:4.500px;background:#444;border:1px solid #5e5e5e"></div>
<div class="a" style="left:982px;top:380px;width:8px;height:8px;border-radius:4px;background:#dcdcdc"></div>
<div class="a" style="left:759px;top:402px;width:286px;height:1px;background:#484848"></div>
<!-- blend row -->
<div class="box" style="left:763px;top:408px;width:129px;height:20px;background:#424242;border-color:#676767"></div>
<span class="t" id="l2" style="left:771px;top:411px">Normal</span>
<svg style="left:881px;top:416px" width="8" height="5" viewBox="0 0 8 5"><use href="#dn"/></svg>
<span class="t" id="l3" style="left:898px;top:411px">Opacity:</span>
<div class="box" style="left:939px;top:408px;width:51px;height:17px;background:#424242;border-color:#676767"></div>
<div class="a" style="left:974px;top:409px;width:1px;height:15px;background:#676767"></div>
<span class="t" id="l4" style="left:944px;top:410px">100%</span>
<svg style="left:979px;top:415px" width="8" height="5" viewBox="0 0 8 5"><use href="#dn"/></svg>
<div class="a" style="left:759px;top:430px;width:286px;height:1px;background:#484848"></div>
<!-- lock row -->
<span class="t" id="l5" style="left:765px;top:439px">Lock:</span>
<svg style="left:798px;top:439px" width="11" height="11" viewBox="0 0 11 11"><rect x="0" y="0" width="11" height="11" fill="#dadada"/><path d="M1.300 1.300h2.800v2.800H1.300zM6.900 1.300h2.800v2.800H6.900zM4.100 4.100h2.800v2.800H4.100zM1.300 6.900h2.800v2.800H1.300zM6.900 6.900h2.800v2.800H6.900z" fill="#4a4a4a"/></svg>
<svg style="left:819px;top:438px" width="14" height="14" viewBox="0 0 14 14"><path d="M12.600 0.600c.6.500.5 1.300-.2 2.200L7.300 8.600L5.600 7.200L10.500 1c.7-.9 1.500-.9 2.100-.4z" fill="#dadada"/><path d="M5 7.900l1.700 1.500c.2 1.500-.7 2.900-2.100 3.500c-1.400.6-3 .6-4.400.3c1.400-.6 1.800-1.400 2-2.600c.2-1.500 1.300-2.600 2.800-2.700z" fill="#dadada"/></svg>
<svg style="left:841px;top:438px" width="13" height="13" viewBox="0 0 13 13"><path d="M6.500 0l2.200 2.700H7.100v3.200h3.200V4.300L13 6.500l-2.700 2.200V7.100H7.100v3.200h1.600L6.500 13L4.300 10.300h1.600V7.100H2.700v1.600L0 6.500l2.700-2.200v1.600h3.200V2.700H4.300z" fill="#dadada"/></svg>
<svg style="left:863px;top:438px" width="15" height="14" viewBox="0 0 15 14"><path d="M2.400 1.900V14M0 11.400H14.200M0 4.500H9L12 7.800V14" fill="none" stroke="#dadada" stroke-width="1.100"/><path d="M9 4.500V7.800H12" fill="none" stroke="#dadada" stroke-width="1"/><rect x="11.500" y="2" width="1.100" height="1.100" fill="#dadada"/><rect x="13.500" y="4" width="1.100" height="1.100" fill="#dadada"/></svg>
<svg style="left:886px;top:438px" width="11" height="13" viewBox="0 0 11 13"><path d="M2.700 6V3.700a2.800 2.800 0 0 1 5.600 0V6" fill="none" stroke="#dadada" stroke-width="1.500"/><rect x="0.300" y="5.600" width="10.400" height="7.200" fill="#dadada"/><rect x="4.600" y="8" width="1.800" height="2.200" fill="#535353"/></svg>
<span class="t" id="l6" style="left:920px;top:439px">Fill:</span>
<div class="box" style="left:939px;top:436px;width:51px;height:17px;background:#424242;border-color:#676767"></div>
<div class="a" style="left:974px;top:437px;width:1px;height:15px;background:#676767"></div>
<span class="t" id="l7" style="left:944px;top:438px">100%</span>
<svg style="left:979px;top:443px" width="8" height="5" viewBox="0 0 8 5"><use href="#dn"/></svg>
<!-- layer list -->
<div class="a" style="left:759px;top:461px;width:286px;height:207px;background:#4d4d4d"></div>
<div class="a" style="left:1028px;top:461px;width:17px;height:207px;background:#4a4a4a"></div>
<div class="a" style="left:759px;top:461px;width:29px;height:40px;background:#535353"></div>
<div class="a" style="left:789px;top:461px;width:239px;height:40px;background:#955353"></div>
<div class="a" style="left:759px;top:501px;width:268px;height:1px;background:#454545"></div>
<svg class="eye" style="left:768px;top:478px" width="13" height="9" viewBox="0 0 13 9"><use href="#eye"/></svg>
<!-- thumb -->
<div class="a" style="left:791px;top:463px;width:30px;height:37px;border:1px solid #fff;background:#3d2a2a"></div>
<div class="a" style="left:801px;top:462px;width:10px;height:3px;background:#666"></div>
<div class="a" style="left:801px;top:498px;width:10px;height:3px;background:#666"></div>
<div class="a" style="left:790px;top:476px;width:3px;height:11px;background:#666"></div>
<div class="a" style="left:819px;top:476px;width:3px;height:11px;background:#666"></div>
<svg style="left:794px;top:466px" width="23" height="31" viewBox="1 1 23 30"><rect x="1" y="1" width="23" height="30" fill="#eeb60a"/><g transform="translate(1 1) scale(0.0608 0.0594) translate(-21 -148)"><use href="#dogpath" fill="#15191b"/><use href="#scarfpath" fill="#b9b9b9"/></g></svg>
<span class="t" id="l8" style="left:827px;top:475px">Layer 0</span>
<!--ENDLAYERS-->
<div class="a" style="left:1044px;top:70px;width:1px;height:598px;background:#3d3d3d"></div>
</body></html>
